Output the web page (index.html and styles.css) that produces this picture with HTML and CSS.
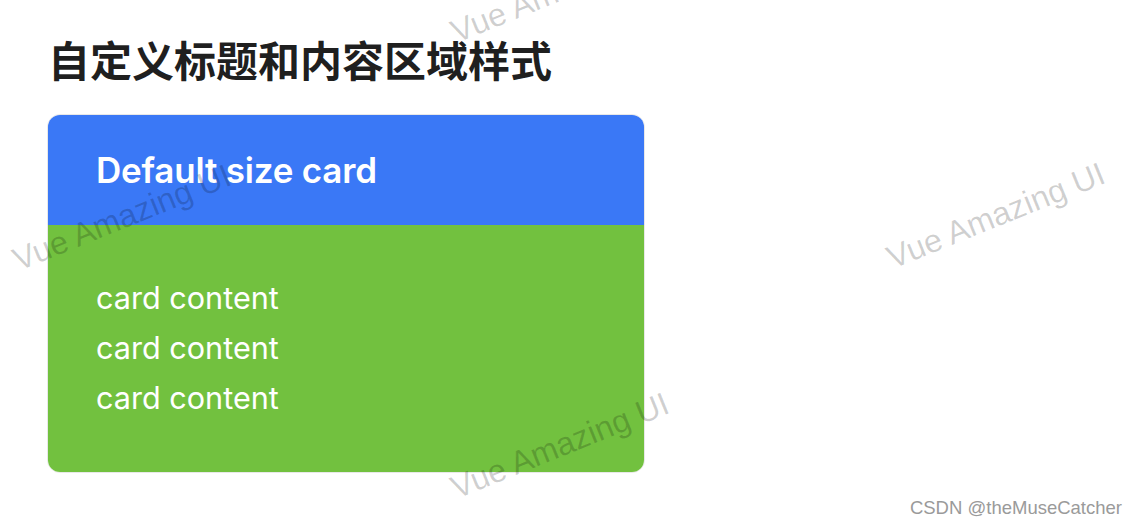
FILE: index.html
```html
<!DOCTYPE html>
<html lang="zh-CN">
<head>
<meta charset="utf-8">
<title>Card</title>
<link rel="stylesheet" href="styles.css">
</head>
<body>
  <main class="page">
    <h1 class="page-title">自定义标题和内容区域样式</h1>
    <section class="card">
      <header class="card-head">Default size card</header>
      <div class="card-body">
        <p>card content</p>
        <p>card content</p>
        <p>card content</p>
      </div>
    </section>
  </main>

  <!-- watermark layer drawn above the page -->
  <div class="watermark" aria-hidden="true">
    <span class="wm-text" style="left:560px; top:-10px">Vue Amazing UI</span>
    <span class="wm-text" style="left:122px; top:218px">Vue Amazing UI</span>
    <span class="wm-text" style="left:996px; top:216px">Vue Amazing UI</span>
    <span class="wm-text" style="left:560px; top:446px">Vue Amazing UI</span>
  </div>

  <div class="credit">CSDN @theMuseCatcher</div>
</body>
</html>
```

FILE: styles.css
```css
html, body {
  margin: 0;
  padding: 0;
  background: #ffffff;
}

body {
  width: 1138px;
  height: 524px;
  overflow: hidden;
  position: relative;
  font-family: Inter, "Noto Sans", "Noto Sans CJK SC", sans-serif;
}

.page {
  padding: 38px 0 0 47px;
}

.page-title {
  margin: 0 0 34px 1px;
  font-family: "Noto Sans CJK SC", "Noto Sans", sans-serif;
  font-size: 42px;
  line-height: 42px;
  font-weight: 700;
  color: rgba(0, 0, 0, 0.88);
}

.card {
  width: 596px;
  border: 1px solid #e8e8e8;
  border-radius: 13px;
  overflow: hidden;
}

.card-head {
  height: 110px;
  display: flex;
  align-items: center;
  padding: 0 48px;
  background: #3a78f6;
  color: #ffffff;
  font-size: 35px;
  font-weight: 600;
  letter-spacing: -0.2px;
}

.card-body {
  height: 151px;
  padding: 48px;
  background: #72c13f;
  color: #ffffff;
  font-size: 30.6px;
  line-height: 50px;
}

.card-body p {
  margin: 0;
}

.watermark {
  position: absolute;
  inset: 0;
  pointer-events: none;
  overflow: hidden;
}

.wm-text {
  position: absolute;
  transform: translate(-50%, -50%) rotate(-22deg);
  white-space: nowrap;
  font-family: "Liberation Sans", Arial, sans-serif;
  font-size: 32.5px;
  color: rgba(0, 0, 0, 0.19);
}

.credit {
  position: absolute;
  right: 16px;
  bottom: 5px;
  font-family: "Liberation Sans", Arial, sans-serif;
  font-size: 18.5px;
  color: #9a9a9a;
}
```
